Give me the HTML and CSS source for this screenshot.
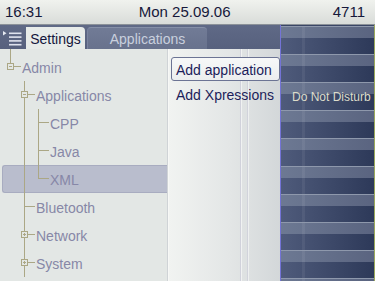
FILE: index.html
```html
<!DOCTYPE html>
<html>
<head>
<meta charset="utf-8">
<link rel="stylesheet" href="styles.css">
</head>
<body>
<div class="screen">
  <header class="status">
    <span>16:31</span>
    <span class="date">Mon 25.09.06</span>
    <span>4711</span>
  </header>
  <div class="main">
    <div class="leftcol">
      <nav class="tabbar">
        <span class="menu-icon">
          <svg width="26" height="24" viewBox="0 0 26 24">
            <polygon points="3,6 3,10.5 6.5,8.2" fill="#e6eaf2"/>
            <rect x="9" y="7.5" width="12.5" height="1.6" fill="#dfe3ee"/>
            <rect x="9" y="11.3" width="12.5" height="1.6" fill="#dfe3ee"/>
            <rect x="9" y="15.1" width="12.5" height="1.6" fill="#dfe3ee"/>
            <rect x="9" y="18.9" width="12.5" height="1.6" fill="#dfe3ee"/>
          </svg>
        </span>
        <span class="tab active">Settings</span>
        <span class="tab">Applications</span>
      </nav>
      <div class="panes">
        <ul class="tree">
          <li class="row"><span class="g bx root minus"><i class="box"></i></span><span class="label">Admin</span></li>
          <li class="row"><span class="g"></span><span class="g bx full minus"><i class="box"></i></span><span class="label">Applications</span></li>
          <li class="row"><span class="g"></span><span class="g v"></span><span class="g t"></span><span class="label">CPP</span></li>
          <li class="row"><span class="g"></span><span class="g v"></span><span class="g t"></span><span class="label">Java</span></li>
          <li class="row selected"><span class="g"></span><span class="g v"></span><span class="g l"></span><span class="label">XML</span></li>
          <li class="row"><span class="g"></span><span class="g t"></span><span class="label">Bluetooth</span></li>
          <li class="row"><span class="g"></span><span class="g bx full plus"><i class="box"></i></span><span class="label">Network</span></li>
          <li class="row"><span class="g"></span><span class="g bx full plus"><i class="box"></i></span><span class="label">System</span></li>
        </ul>
        <ul class="menu">
          <li class="item sel">Add application</li>
          <li class="item">Add Xpressions</li>
        </ul>
      </div>
    </div>
    <aside class="side">
      <div class="srow"></div>
      <div class="srow"></div>
      <div class="srow"><span class="key">Do Not Disturb</span></div>
      <div class="srow"></div>
      <div class="srow"></div>
      <div class="srow"></div>
      <div class="srow"></div>
      <div class="srow"></div>
      <div class="srow"></div>
      <div class="srow"></div>
    </aside>
  </div>
</div>
</body>
</html>
```
FILE: styles.css
```css
* { box-sizing: border-box; }
html, body { margin: 0; padding: 0; }
body {
  width: 375px;
  height: 281px;
  overflow: hidden;
  font-family: "Liberation Sans", Arial, sans-serif;
  background: #e3e7e5;
}
.screen {
  width: 375px;
  height: 281px;
  display: flex;
  flex-direction: column;
  overflow: hidden;
}

/* status bar */
.status {
  height: 25px;
  flex-shrink: 0;
  display: flex;
  align-items: center;
  justify-content: space-between;
  padding: 0 10px 1px 5px;
  background: linear-gradient(#f0f2ee, #d9dcd9);
  border-bottom: 1px solid #8b9198;
  color: #16183a;
  font-size: 15px;
}
.status .date { margin-right: 6px; }

.main {
  flex: 1;
  display: flex;
  min-height: 0;
}
.leftcol {
  width: 280px;
  display: flex;
  flex-direction: column;
}

/* tab bar */
.tabbar {
  height: 24px;
  flex-shrink: 0;
  display: flex;
  align-items: flex-end;
  background: linear-gradient(#5f6986, #57617e);
}
.menu-icon {
  width: 26px;
  height: 24px;
  display: block;
}
.menu-icon svg { display: block; }
.tab {
  height: 22px;
  display: flex;
  align-items: center;
  justify-content: center;
  font-size: 14px;
  border-radius: 0 4px 0 0;
}
.tab.active {
  width: 59px;
  background: #e7ebe9;
  color: #14163c;
  padding-top: 1px;
}
.tab:not(.active) {
  width: 120px;
  margin-left: 2px;
  background: linear-gradient(#717b96, #68728d);
  border-top: 1px solid #8690a8;
  border-left: 1px solid #7a84a0;
  border-radius: 4px 4px 0 0;
  color: #c9d0de;
}

.panes {
  flex: 1;
  display: flex;
  min-height: 0;
}

/* tree */
.tree {
  list-style: none;
  margin: 0;
  padding: 4px 0 0 0;
  width: 168px;
  background: #e3e7e5;
  border-right: 1px solid #cfd3d6;
  overflow: hidden;
}
.row {
  height: 28px;
  display: flex;
  align-items: center;
  margin-left: 2px;
  padding-left: 2px;
  border: 1px solid transparent;
  border-right: 0;
  border-left-width: 0;
}
.row.selected {
  background: #b9bdcd;
  border: 1px solid #a8acc0;
  border-right: 0;
  border-radius: 3px 0 0 3px;
  padding-left: 1px;
}
.label {
  margin-left: 4px;
  padding-top: 2px;
  font-size: 14px;
  color: #8787a7;
  white-space: nowrap;
}
.g {
  position: relative;
  width: 14px;
  height: 28px;
  flex-shrink: 0;
}
.row.selected .g { height: 26px; margin-top: -1px; margin-bottom: -1px; height: 28px; }
.g::before, .g::after {
  content: "";
  position: absolute;
  background: #aba785;
}
.g:not(.v):not(.t):not(.l):not(.bx)::before,
.g:not(.v):not(.t):not(.l):not(.bx)::after { display: none; }
.g.v::after { display: none; }
.g.v::before, .g.t::before, .g.bx.full::before {
  left: 6px; top: 0; bottom: 0; width: 1px;
}
.g.l::before {
  left: 6px; top: 0; height: 14px; width: 1px;
}
.g.bx.root::before {
  left: 6px; top: -4px; height: 15px; width: 1px;
}
.g.t::after, .g.l::after, .g.bx::after {
  left: 7px; top: 13px; width: 10px; height: 1px;
}
.box {
  position: absolute;
  left: 3px;
  top: 10px;
  width: 7px;
  height: 7px;
  border: 1px solid #aba785;
  background: #e3e7e5;
  z-index: 1;
}
.box::before, .box::after {
  content: "";
  position: absolute;
  background: #aba785;
}
.box::before { left: 1px; top: 2px; width: 3px; height: 1px; }
.plus .box::after { left: 2px; top: 1px; width: 1px; height: 3px; }

/* menu */
.menu {
  list-style: none;
  margin: 0;
  padding: 8px 0 0 2px;
  flex: 1;
  background:
    linear-gradient(to right, transparent 71px, rgba(190,190,210,.45) 71px 72px, rgba(255,255,255,.55) 72px 73px, transparent 73px 78px, rgba(190,190,210,.4) 78px 79px, rgba(255,255,255,.5) 79px 80px, transparent 80px),
    linear-gradient(to right, #f1f3f1 0, #e3e6e6 55%, #d3d7d9 100%);
  border-left: 1px solid #f7f8f6;
}
.item {
  height: 24px;
  margin-bottom: 1px;
  display: flex;
  align-items: center;
  padding: 1px 0 0 4px;
  border: 1px solid transparent;
  font-size: 14px;
  color: #1c1d5a;
  white-space: nowrap;
}
.item.sel {
  border-color: #6c7494;
  border-radius: 3px;
  background: linear-gradient(#f7f8f8, #eceeef);
}

/* right side stripes */
.side {
  width: 95px;
  flex-shrink: 0;
  padding-top: 1px;
  border-left: 1px solid #7474d6;
  border-right: 1px solid #9aa95c;
  background: #3a4666;
  overflow: hidden;
}
.srow {
  height: 28px;
  display: flex;
  align-items: center;
  border-top: 1px solid #8e98ac;
  background:
    linear-gradient(to right, transparent 21px, rgba(255,255,255,.06) 21px 24px, transparent 24px),
    linear-gradient(to right, #6d7993, #5a6480) 0 0 / 100% 11px no-repeat,
    linear-gradient(to right, #4f5b7b, #2d3959);
}
.key {
  padding-left: 11px;
  font-size: 12px;
  color: #dcdcca;
  white-space: nowrap;
}
```
